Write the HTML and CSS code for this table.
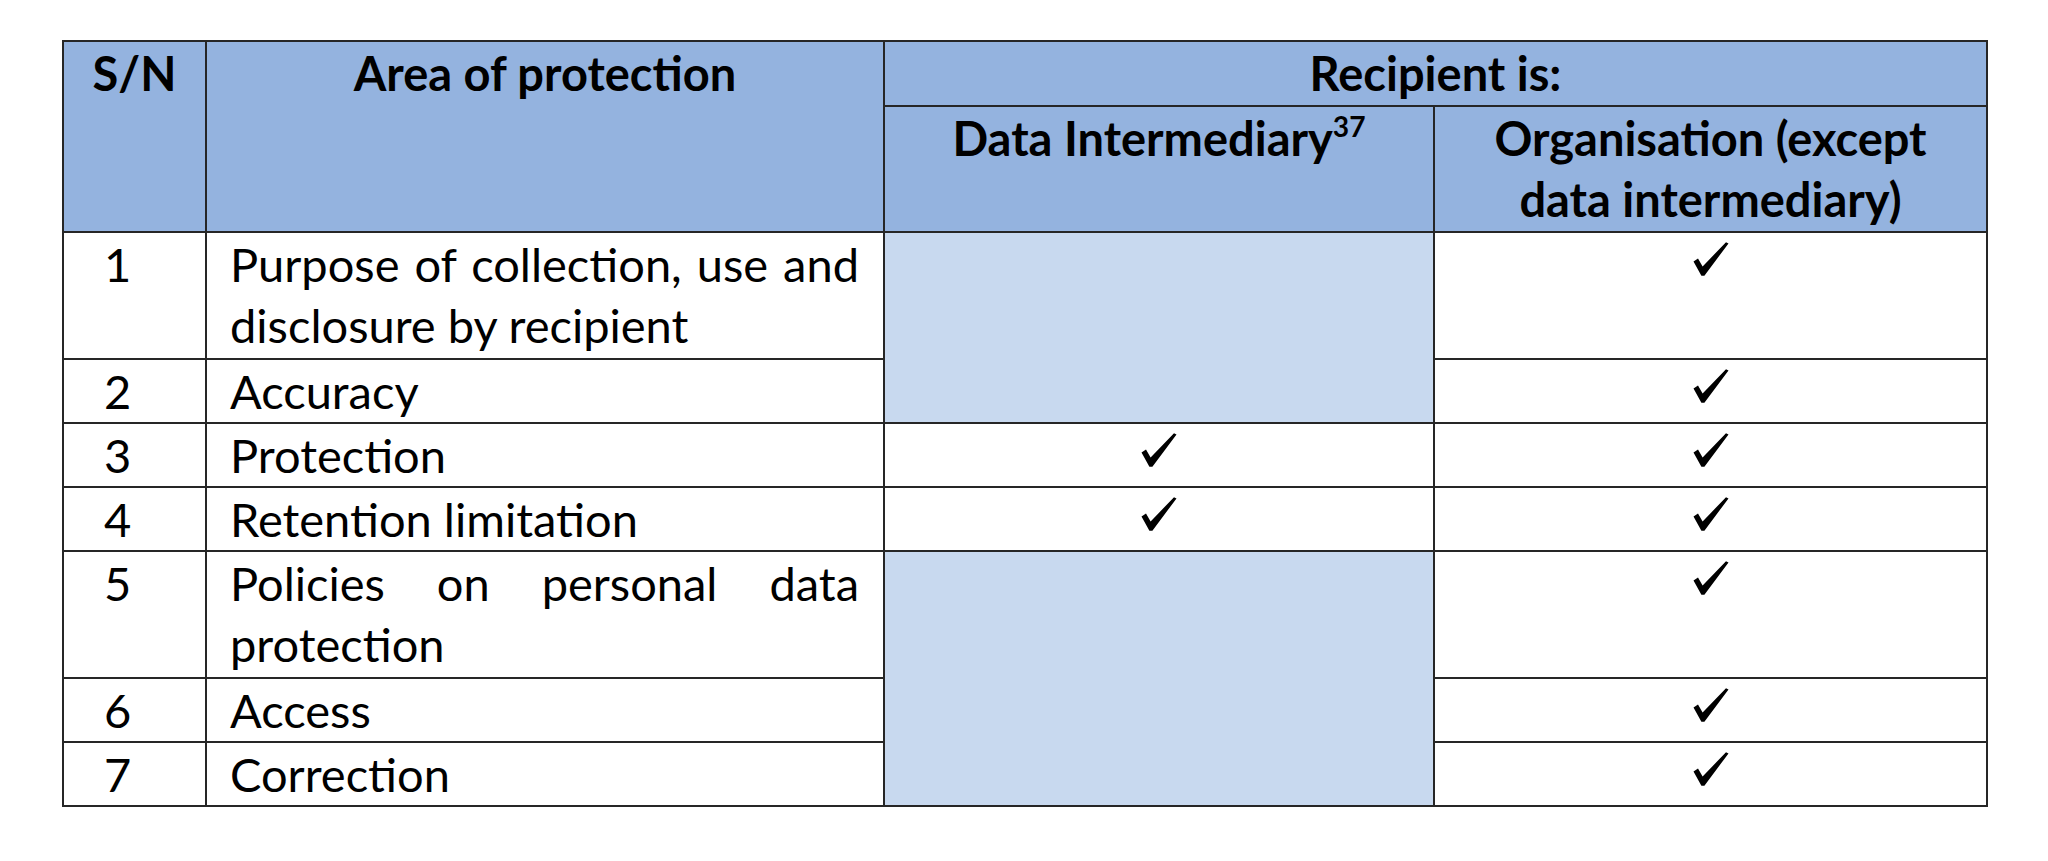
FILE: index.html
```html
<!DOCTYPE html>
<html lang="en">
<head>
<meta charset="utf-8">
<title>Recipient protection table</title>
<link rel="stylesheet" href="styles.css">
</head>
<body>
<svg class="defs" width="0" height="0" aria-hidden="true">
  <defs>
    <symbol id="tick" viewBox="0 0 36 34">
      <path d="M0.5 19.5 L5 16.4 L9.6 24.4 L33 0.3 L35.5 1.4 L11.4 33.7 L8.4 33.7 Z"/>
    </symbol>
  </defs>
</svg>
<main class="page">
  <table class="grid">
    <colgroup>
      <col class="c-sn">
      <col class="c-area">
      <col class="c-di">
      <col class="c-org">
    </colgroup>
    <thead>
      <tr class="h1">
        <th class="hd" rowspan="2">S/N</th>
        <th class="hd" rowspan="2">Area of protection</th>
        <th class="hd" colspan="2">Recipient is:</th>
      </tr>
      <tr class="h2">
        <th class="hd">Data Intermediary<sup>37</sup></th>
        <th class="hd wrap">Organisation (except data intermediary)</th>
      </tr>
    </thead>
    <tbody>
      <tr class="r2">
        <td class="num">1</td>
        <td class="txt">Purpose of collection, use and disclosure by recipient</td>
        <td class="shade" rowspan="2"></td>
        <td class="chk"><svg class="tk"><use href="#tick"/></svg></td>
      </tr>
      <tr class="r1">
        <td class="num">2</td>
        <td class="txt">Accuracy</td>
        <td class="chk"><svg class="tk"><use href="#tick"/></svg></td>
      </tr>
      <tr class="r1">
        <td class="num">3</td>
        <td class="txt">Protection</td>
        <td class="chk"><svg class="tk"><use href="#tick"/></svg></td>
        <td class="chk"><svg class="tk"><use href="#tick"/></svg></td>
      </tr>
      <tr class="r1">
        <td class="num">4</td>
        <td class="txt">Retention limitation</td>
        <td class="chk"><svg class="tk"><use href="#tick"/></svg></td>
        <td class="chk"><svg class="tk"><use href="#tick"/></svg></td>
      </tr>
      <tr class="r2">
        <td class="num">5</td>
        <td class="txt">Policies on personal data protection</td>
        <td class="shade" rowspan="3"></td>
        <td class="chk"><svg class="tk"><use href="#tick"/></svg></td>
      </tr>
      <tr class="r1">
        <td class="num">6</td>
        <td class="txt">Access</td>
        <td class="chk"><svg class="tk"><use href="#tick"/></svg></td>
      </tr>
      <tr class="r1">
        <td class="num">7</td>
        <td class="txt">Correction</td>
        <td class="chk"><svg class="tk"><use href="#tick"/></svg></td>
      </tr>
    </tbody>
  </table>
</main>
</body>
</html>
```
FILE: styles.css
```css
html, body {
  margin: 0;
  padding: 0;
  background: #ffffff;
}

.defs {
  position: absolute;
  width: 0;
  height: 0;
  overflow: hidden;
}

.page {
  padding: 40px 0 0 62px;
  font-family: Lato, "Open Sans", "Liberation Sans", sans-serif;
  color: #000000;
}

.grid {
  border-collapse: collapse;
  table-layout: fixed;
  width: 1924px;
  font-size: 47px;
  line-height: 61px;
}

.c-sn { width: 143px; }
.c-area { width: 678px; }
.c-di { width: 550px; }
.c-org { width: 553px; }

.grid th,
.grid td {
  border: 2px solid #262626;
  vertical-align: top;
  padding: 1px 0 0 0;
}

.hd {
  background: #94b3df;
  font-weight: 700;
  text-align: center;
}

.hd.wrap {
  padding-left: 40px;
  padding-right: 40px;
}

.h1 { height: 65px; }
.h2 { height: 126px; }
.r1 { height: 64px; }
.r2 { height: 127px; }

.hd sup {
  font-size: 0.6em;
  line-height: 0;
  vertical-align: 0.66em;
}

.num {
  padding-left: 40px !important;
  text-align: left;
}

.txt {
  padding-left: 23px !important;
  padding-right: 24px !important;
  text-align: justify;
}

.shade {
  background: #c8d9ef;
}

.chk {
  text-align: center;
}

.tk {
  display: inline-block;
  width: 36px;
  height: 34px;
  margin-top: 8px;
  fill: #000000;
  vertical-align: top;
}
```
